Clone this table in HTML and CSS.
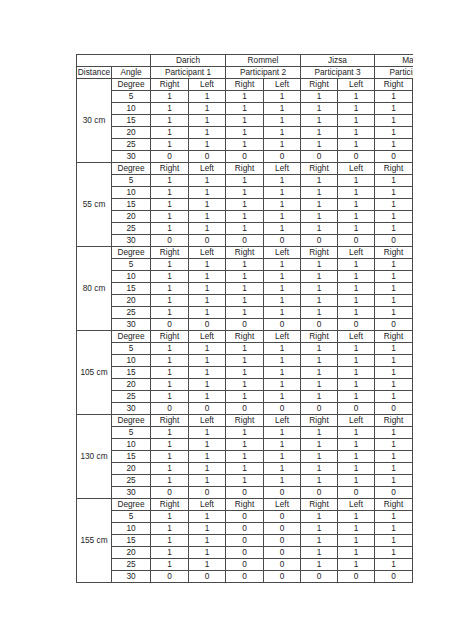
FILE: index.html
```html
<!DOCTYPE html>
<html>
<head>
<meta charset="utf-8">
<link rel="stylesheet" href="styles.css">
</head>
<body>
<div class="clip">
<table class="grid">
<colgroup>
<col class="c-dist"><col class="c-ang">
<col class="c-a"><col class="c-b"><col class="c-a"><col class="c-b"><col class="c-b"><col class="c-b"><col class="c-a"><col class="c-a">
</colgroup>
<tr><td colspan="2"></td><td colspan="2">Darich</td><td colspan="2">Rommel</td><td colspan="2">Jizsa</td><td colspan="2">Maria</td></tr>
<tr><td>Distance</td><td>Angle</td><td colspan="2">Participant 1</td><td colspan="2">Participant 2</td><td colspan="2">Participant 3</td><td colspan="2">Participant 4</td></tr>

<tr><td rowspan="7">30 cm</td><td>Degree</td><td>Right</td><td>Left</td><td>Right</td><td>Left</td><td>Right</td><td>Left</td><td>Right</td><td></td></tr>
<tr><td>5</td><td>1</td><td>1</td><td>1</td><td>1</td><td>1</td><td>1</td><td>1</td><td></td></tr>
<tr><td>10</td><td>1</td><td>1</td><td>1</td><td>1</td><td>1</td><td>1</td><td>1</td><td></td></tr>
<tr><td>15</td><td>1</td><td>1</td><td>1</td><td>1</td><td>1</td><td>1</td><td>1</td><td></td></tr>
<tr><td>20</td><td>1</td><td>1</td><td>1</td><td>1</td><td>1</td><td>1</td><td>1</td><td></td></tr>
<tr><td>25</td><td>1</td><td>1</td><td>1</td><td>1</td><td>1</td><td>1</td><td>1</td><td></td></tr>
<tr><td>30</td><td>0</td><td>0</td><td>0</td><td>0</td><td>0</td><td>0</td><td>0</td><td></td></tr>

<tr><td rowspan="7">55 cm</td><td>Degree</td><td>Right</td><td>Left</td><td>Right</td><td>Left</td><td>Right</td><td>Left</td><td>Right</td><td></td></tr>
<tr><td>5</td><td>1</td><td>1</td><td>1</td><td>1</td><td>1</td><td>1</td><td>1</td><td></td></tr>
<tr><td>10</td><td>1</td><td>1</td><td>1</td><td>1</td><td>1</td><td>1</td><td>1</td><td></td></tr>
<tr><td>15</td><td>1</td><td>1</td><td>1</td><td>1</td><td>1</td><td>1</td><td>1</td><td></td></tr>
<tr><td>20</td><td>1</td><td>1</td><td>1</td><td>1</td><td>1</td><td>1</td><td>1</td><td></td></tr>
<tr><td>25</td><td>1</td><td>1</td><td>1</td><td>1</td><td>1</td><td>1</td><td>1</td><td></td></tr>
<tr><td>30</td><td>0</td><td>0</td><td>0</td><td>0</td><td>0</td><td>0</td><td>0</td><td></td></tr>

<tr><td rowspan="7">80 cm</td><td>Degree</td><td>Right</td><td>Left</td><td>Right</td><td>Left</td><td>Right</td><td>Left</td><td>Right</td><td></td></tr>
<tr><td>5</td><td>1</td><td>1</td><td>1</td><td>1</td><td>1</td><td>1</td><td>1</td><td></td></tr>
<tr><td>10</td><td>1</td><td>1</td><td>1</td><td>1</td><td>1</td><td>1</td><td>1</td><td></td></tr>
<tr><td>15</td><td>1</td><td>1</td><td>1</td><td>1</td><td>1</td><td>1</td><td>1</td><td></td></tr>
<tr><td>20</td><td>1</td><td>1</td><td>1</td><td>1</td><td>1</td><td>1</td><td>1</td><td></td></tr>
<tr><td>25</td><td>1</td><td>1</td><td>1</td><td>1</td><td>1</td><td>1</td><td>1</td><td></td></tr>
<tr><td>30</td><td>0</td><td>0</td><td>0</td><td>0</td><td>0</td><td>0</td><td>0</td><td></td></tr>

<tr><td rowspan="7">105 cm</td><td>Degree</td><td>Right</td><td>Left</td><td>Right</td><td>Left</td><td>Right</td><td>Left</td><td>Right</td><td></td></tr>
<tr><td>5</td><td>1</td><td>1</td><td>1</td><td>1</td><td>1</td><td>1</td><td>1</td><td></td></tr>
<tr><td>10</td><td>1</td><td>1</td><td>1</td><td>1</td><td>1</td><td>1</td><td>1</td><td></td></tr>
<tr><td>15</td><td>1</td><td>1</td><td>1</td><td>1</td><td>1</td><td>1</td><td>1</td><td></td></tr>
<tr><td>20</td><td>1</td><td>1</td><td>1</td><td>1</td><td>1</td><td>1</td><td>1</td><td></td></tr>
<tr><td>25</td><td>1</td><td>1</td><td>1</td><td>1</td><td>1</td><td>1</td><td>1</td><td></td></tr>
<tr><td>30</td><td>0</td><td>0</td><td>0</td><td>0</td><td>0</td><td>0</td><td>0</td><td></td></tr>

<tr><td rowspan="7">130 cm</td><td>Degree</td><td>Right</td><td>Left</td><td>Right</td><td>Left</td><td>Right</td><td>Left</td><td>Right</td><td></td></tr>
<tr><td>5</td><td>1</td><td>1</td><td>1</td><td>1</td><td>1</td><td>1</td><td>1</td><td></td></tr>
<tr><td>10</td><td>1</td><td>1</td><td>1</td><td>1</td><td>1</td><td>1</td><td>1</td><td></td></tr>
<tr><td>15</td><td>1</td><td>1</td><td>1</td><td>1</td><td>1</td><td>1</td><td>1</td><td></td></tr>
<tr><td>20</td><td>1</td><td>1</td><td>1</td><td>1</td><td>1</td><td>1</td><td>1</td><td></td></tr>
<tr><td>25</td><td>1</td><td>1</td><td>1</td><td>1</td><td>1</td><td>1</td><td>1</td><td></td></tr>
<tr><td>30</td><td>0</td><td>0</td><td>0</td><td>0</td><td>0</td><td>0</td><td>0</td><td></td></tr>

<tr><td rowspan="7">155 cm</td><td>Degree</td><td>Right</td><td>Left</td><td>Right</td><td>Left</td><td>Right</td><td>Left</td><td>Right</td><td></td></tr>
<tr><td>5</td><td>1</td><td>1</td><td>0</td><td>0</td><td>1</td><td>1</td><td>1</td><td></td></tr>
<tr><td>10</td><td>1</td><td>1</td><td>0</td><td>0</td><td>1</td><td>1</td><td>1</td><td></td></tr>
<tr><td>15</td><td>1</td><td>1</td><td>0</td><td>0</td><td>1</td><td>1</td><td>1</td><td></td></tr>
<tr><td>20</td><td>1</td><td>1</td><td>0</td><td>0</td><td>1</td><td>1</td><td>1</td><td></td></tr>
<tr><td>25</td><td>1</td><td>1</td><td>0</td><td>0</td><td>1</td><td>1</td><td>1</td><td></td></tr>
<tr><td>30</td><td>0</td><td>0</td><td>0</td><td>0</td><td>0</td><td>0</td><td>0</td><td></td></tr>
</table>
</div>
</body>
</html>
```

FILE: styles.css
```css
html, body {
  margin: 0;
  padding: 0;
  background: #ffffff;
}
body {
  padding: 54px 0 0 76px;
}
.clip {
  width: 337px;
  overflow: hidden;
}
.grid {
  border-collapse: collapse;
  table-layout: fixed;
  width: 375px;
  font-family: "Liberation Sans", Arial, sans-serif;
  font-size: 8.3px;
  color: #242424;
}
.c-dist { width: 35px; }
.c-ang { width: 39px; }
.c-a { width: 38px; }
.c-b { width: 37px; }
.grid td {
  border: 1px solid #4a4a4a;
  height: 11px;
  padding: 0;
  line-height: 11px;
  text-align: center;
  vertical-align: middle;
  white-space: nowrap;
  overflow: hidden;
}
```
